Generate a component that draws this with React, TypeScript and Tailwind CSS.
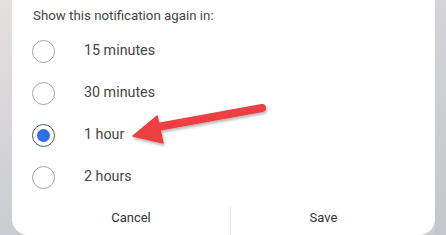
import React from "react";

const options = [
  { label: "15 minutes", selected: false },
  { label: "30 minutes", selected: false },
  { label: "1 hour", selected: true },
  { label: "2 hours", selected: false },
];

function Radio({ selected }: { selected: boolean }) {
  if (selected) {
    return (
      <div className="w-[23px] h-[23px] rounded-full border-[1.5px] border-[#4a5568] flex items-center justify-center">
        <div className="w-[13px] h-[13px] rounded-full bg-[#2f6fe4]" />
      </div>
    );
  }
  return <div className="w-[23px] h-[23px] rounded-full border-[1.5px] border-[#a3a3a3]" />;
}

export default function App() {
  return (
    <div
      className="relative w-[446px] h-[235px] overflow-hidden flex bg-gradient-to-b from-[#e6dfdf] to-[#c9ccd2]"
      style={{ fontFamily: "Roboto, 'Open Sans', Arial, sans-serif" }}
    >
      <div className="w-[12px] shrink-0" />
      <div className="w-[423px] h-[235px] bg-white rounded-b-[16px] flex flex-col">
        <div className="h-[30px] pl-[21px] pt-[7px] text-[13.3px] leading-[18px] text-[#454545]">
          Show this notification again in:
        </div>
        {options.map((o) => (
          <div key={o.label} className="h-[42px] flex items-center pl-[20px]">
            <Radio selected={o.selected} />
            <span className="ml-[29px] text-[14.3px] text-[#454545]">{o.label}</span>
          </div>
        ))}
        <div className="flex-1 flex pl-[20px] pr-[19px]">
          <div className="w-[198px] flex items-center justify-center text-[13px] text-[#333] pt-[3px]">
            Cancel
          </div>
          <div className="w-px bg-[#e4e4e4] mt-[9px]" />
          <div className="flex-1 flex items-center justify-center text-[13px] text-[#333] pt-[3px]">
            Save
          </div>
        </div>
      </div>
      <div className="flex-1 bg-gradient-to-b from-[#d4d4da] to-[#c4c6cc]" />
      <svg
        className="absolute left-0 top-0 pointer-events-none"
        width="446"
        height="235"
        viewBox="0 0 446 235"
      >
        <defs>
          <filter id="sh" x="-20%" y="-50%" width="140%" height="200%">
            <feDropShadow dx="1" dy="2" stdDeviation="1.5" floodColor="#000" floodOpacity="0.3" />
          </filter>
        </defs>
        <g filter="url(#sh)">
          <line x1="262" y1="108" x2="152" y2="128" stroke="#ec4142" strokeWidth="8" strokeLinecap="round" />
          <polygon points="133,136 157,116 163,143" fill="#ec4142" strokeLinejoin="round" stroke="#ec4142" strokeWidth="1.5" />
        </g>
      </svg>
    </div>
  );
}
